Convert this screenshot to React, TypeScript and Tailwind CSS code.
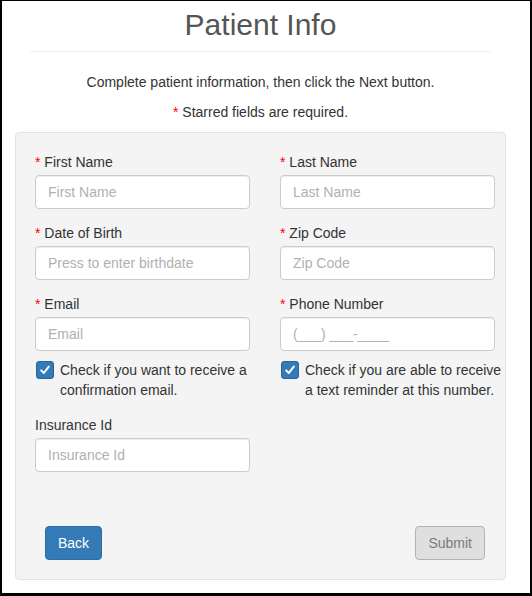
import React from "react";

const font = { fontFamily: '"Liberation Sans", Arial, sans-serif' };

function Label({ text, required = true }: { text: string; required?: boolean }) {
  return (
    <label className="block h-[20px] leading-[20px] text-[14px] text-[#333] mb-[3px]">
      {required && <span className="text-[#ff0000]">* </span>}
      {text}
    </label>
  );
}

function Input({ placeholder }: { placeholder: string }) {
  return (
    <input
      readOnly
      placeholder={placeholder}
      className="block w-full h-[34px] px-[12px] bg-white border border-[#ccc] rounded-[4px] text-[14px] text-[#555] placeholder:text-[#b1b1b1] shadow-[inset_0_1px_1px_rgba(0,0,0,0.075)] outline-none"
      style={font}
    />
  );
}

function Check({ lines }: { lines: string[] }) {
  return (
    <div className="flex items-start mt-[9px]">
      <span className="mt-[1px] ml-[1px] w-[18px] h-[18px] shrink-0 rounded-[3px] bg-[#337ab7] border border-[#2a6496] flex items-center justify-center">
        <svg width="12" height="12" viewBox="0 0 12 12">
          <path d="M2.2 6.4 L4.8 9 L9.8 2.6" fill="none" stroke="white" strokeWidth="2" strokeLinecap="round" strokeLinejoin="round" />
        </svg>
      </span>
      <div className="ml-[6px] text-[14px] leading-[20px] text-[#333] whitespace-nowrap">
        {lines.map((l, i) => (
          <div key={i}>{l}</div>
        ))}
      </div>
    </div>
  );
}

export default function App() {
  return (
    <div
      className="w-[532px] h-[596px] box-border border-l-2 border-r-2 border-t border-b-[3px] border-black bg-white overflow-hidden"
      style={font}
    >
      <div className="ml-[13px] w-[491px]">
        <h1 className="mt-[6px] h-[36px] leading-[36px] text-center text-[30px] text-[#555] font-normal">
          Patient Info
        </h1>
        <div className="mt-[8px] mx-[15px] border-t border-[#eee]" />
        <p className="mt-[20px] h-[20px] leading-[20px] text-center text-[14px] text-[#333]">
          Complete patient information, then click the Next button.
        </p>
        <p className="mt-[10px] h-[20px] leading-[20px] text-center text-[14px] text-[#333]">
          <span className="text-[#ff0000]">*</span> Starred fields are required.
        </p>
        <div className="mt-[10px] h-[448px] box-border border border-[#e3e3e3] rounded-[4px] bg-[#f4f4f4] pt-[19px] pl-[19px] pr-[10px]">
          <div className="grid grid-cols-[215px_215px] gap-x-[30px]">
            <div>
              <Label text="First Name" />
              <Input placeholder="First Name" />
            </div>
            <div>
              <Label text="Last Name" />
              <Input placeholder="Last Name" />
            </div>
            <div className="mt-[14px]">
              <Label text="Date of Birth" />
              <Input placeholder="Press to enter birthdate" />
            </div>
            <div className="mt-[14px]">
              <Label text="Zip Code" />
              <Input placeholder="Zip Code" />
            </div>
            <div className="mt-[14px]">
              <Label text="Email" />
              <Input placeholder="Email" />
              <Check lines={["Check if you want to receive a", "confirmation email."]} />
            </div>
            <div className="mt-[14px]">
              <Label text="Phone Number" />
              <Input placeholder="(___) ___-____" />
              <Check lines={["Check if you are able to receive", "a text reminder at this number."]} />
            </div>
            <div className="mt-[15px]">
              <Label text="Insurance Id" required={false} />
              <Input placeholder="Insurance Id" />
            </div>
            <div />
          </div>
          <div className="mt-[54px] px-[10px] flex justify-between">
            <button
              className="h-[34px] px-[12px] rounded-[4px] bg-[#337ab7] border border-[#2e6da4] text-white text-[14px]"
              style={font}
            >
              Back
            </button>
            <button
              className="h-[34px] px-[12px] rounded-[4px] bg-[#dfdfdf] border border-[#b3b3b3] text-[#7b7b7b] text-[14px]"
              style={font}
            >
              Submit
            </button>
          </div>
        </div>
      </div>
    </div>
  );
}
